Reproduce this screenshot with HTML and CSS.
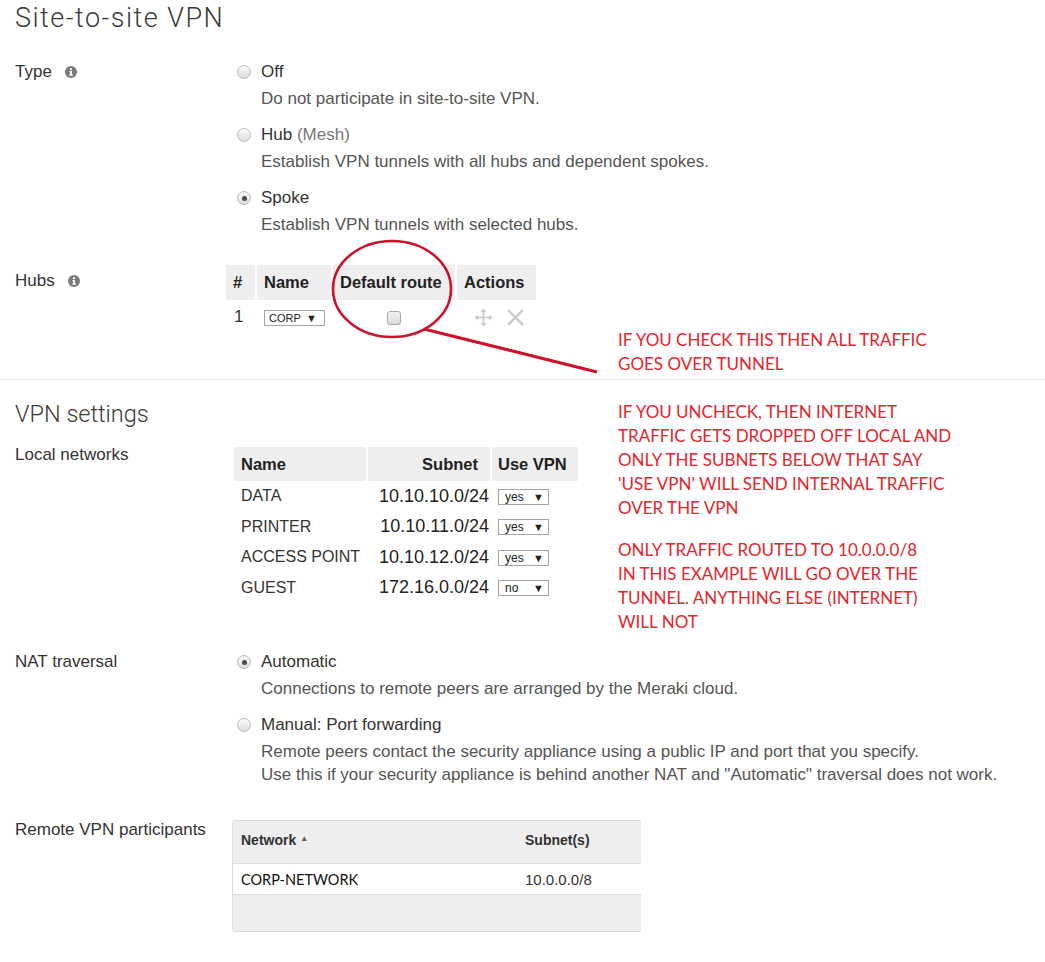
FILE: index.html
```html
<!DOCTYPE html>
<html lang="en">
<head>
<meta charset="utf-8">
<title>Site-to-site VPN</title>
<link rel="stylesheet" href="styles.css">
</head>
<body>
<div class="page">
  <h1 class="title">Site-to-site VPN</h1>

  <div class="field field-type">
    <div class="label">Type <svg class="info" viewBox="0 0 12 12" width="12" height="12"><circle cx="6" cy="6" r="6" fill="#7b7b7b"/><circle cx="6" cy="3.2" r="1.1" fill="#fff"/><path d="M4.4 5h2.6v3.6h0.9v1.2H4.3V8.6h0.9V6.2h-0.8z" fill="#fff"/></svg></div>
    <div class="options">
      <div class="option">
        <div class="opt-line"><span class="radio"></span><span>Off</span></div>
        <div class="desc">Do not participate in site-to-site VPN.</div>
      </div>
      <div class="option">
        <div class="opt-line"><span class="radio"></span><span>Hub <span class="muted">(Mesh)</span></span></div>
        <div class="desc">Establish VPN tunnels with all hubs and dependent spokes.</div>
      </div>
      <div class="option">
        <div class="opt-line"><span class="radio on"></span><span>Spoke</span></div>
        <div class="desc">Establish VPN tunnels with selected hubs.</div>
      </div>
    </div>
  </div>

  <div class="field field-hubs">
    <div class="label label-hubs">Hubs <svg class="info" viewBox="0 0 12 12" width="12" height="12"><circle cx="6" cy="6" r="6" fill="#7b7b7b"/><circle cx="6" cy="3.2" r="1.1" fill="#fff"/><path d="M4.4 5h2.6v3.6h0.9v1.2H4.3V8.6h0.9V6.2h-0.8z" fill="#fff"/></svg></div>
    <div class="content">
      <table class="hubs">
        <thead>
          <tr><th class="c-num">#</th><th class="c-name">Name</th><th class="c-def">Default route</th><th class="c-act">Actions</th></tr>
        </thead>
        <tbody>
          <tr>
            <td class="c-num">1</td>
            <td class="c-name"><span class="sel sel-corp"><span class="sel-text">CORP</span><span class="sel-arrow">▼</span></span></td>
            <td class="c-def"><span class="checkbox"></span></td>
            <td class="c-act">
              <svg class="ico-move" viewBox="0 0 20 20" width="19" height="19"><g stroke="#cacaca" stroke-width="1.6"><line x1="10" y1="3" x2="10" y2="17"/><line x1="3" y1="10" x2="17" y2="10"/></g><g fill="#cacaca"><polygon points="10,0.5 6.8,4.2 13.2,4.2"/><polygon points="10,19.5 6.8,15.8 13.2,15.8"/><polygon points="0.5,10 4.2,6.8 4.2,13.2"/><polygon points="19.5,10 15.8,6.8 15.8,13.2"/></g></svg>
              <svg class="ico-x" viewBox="0 0 17 17" width="17" height="17"><g stroke="#cacaca" stroke-width="2.4" stroke-linecap="square"><line x1="2" y1="2" x2="15" y2="15"/><line x1="15" y1="2" x2="2" y2="15"/></g></svg>
            </td>
          </tr>
        </tbody>
      </table>
    </div>
  </div>
</div>

<hr class="divider">

<div class="page">
  <h2 class="subtitle">VPN settings</h2>

  <div class="field field-local">
    <div class="label">Local networks</div>
    <div class="content">
      <table class="local">
        <thead>
          <tr><th class="l-name">Name</th><th class="l-sub">Subnet</th><th class="l-use">Use VPN</th></tr>
        </thead>
        <tbody>
          <tr><td class="l-name">DATA</td><td class="l-sub">10.10.10.0/24</td><td class="l-use"><span class="sel sel-yn"><span class="sel-text">yes</span><span class="sel-arrow">▼</span></span></td></tr>
          <tr><td class="l-name">PRINTER</td><td class="l-sub">10.10.11.0/24</td><td class="l-use"><span class="sel sel-yn"><span class="sel-text">yes</span><span class="sel-arrow">▼</span></span></td></tr>
          <tr><td class="l-name">ACCESS POINT</td><td class="l-sub">10.10.12.0/24</td><td class="l-use"><span class="sel sel-yn"><span class="sel-text">yes</span><span class="sel-arrow">▼</span></span></td></tr>
          <tr><td class="l-name">GUEST</td><td class="l-sub">172.16.0.0/24</td><td class="l-use"><span class="sel sel-yn"><span class="sel-text">no</span><span class="sel-arrow">▼</span></span></td></tr>
        </tbody>
      </table>
    </div>
  </div>

  <div class="field field-nat">
    <div class="label">NAT traversal</div>
    <div class="options">
      <div class="option">
        <div class="opt-line"><span class="radio on"></span><span>Automatic</span></div>
        <div class="desc">Connections to remote peers are arranged by the Meraki cloud.</div>
      </div>
      <div class="option">
        <div class="opt-line"><span class="radio"></span><span>Manual: Port forwarding</span></div>
        <div class="desc">Remote peers contact the security appliance using a public IP and port that you specify.<br>Use this if your security appliance is behind another NAT and "Automatic" traversal does not work.</div>
      </div>
    </div>
  </div>

  <div class="field field-remote">
    <div class="label">Remote VPN participants</div>
    <div class="content">
      <div class="rtable">
        <div class="rhead"><div class="rc1">Network <span class="sort">▲</span></div><div class="rc2">Subnet(s)</div></div>
        <div class="rrow"><div class="rc1 rnet">CORP-NETWORK</div><div class="rc2 rsub">10.0.0.0/8</div></div>
        <div class="rfoot"></div>
      </div>
    </div>
  </div>
</div>

<svg class="markup" viewBox="0 0 1045 962" width="1045" height="962">
  <ellipse cx="392" cy="289" rx="59" ry="48" fill="none" stroke="#c9142b" stroke-width="2.6"/>
  <line x1="424" y1="329" x2="597" y2="372" stroke="#c9142b" stroke-width="3"/>
</svg>

<div class="note">
  <p class="p1">IF YOU CHECK THIS THEN ALL TRAFFIC<br>GOES OVER TUNNEL</p>
  <p class="p2">IF YOU UNCHECK, THEN INTERNET<br>TRAFFIC GETS DROPPED OFF LOCAL AND<br>ONLY THE SUBNETS BELOW THAT SAY<br>'USE VPN' WILL SEND INTERNAL TRAFFIC<br>OVER THE VPN</p>
  <p class="p3">ONLY TRAFFIC ROUTED TO 10.0.0.0/8<br>IN THIS EXAMPLE WILL GO OVER THE<br>TUNNEL. ANYTHING ELSE (INTERNET)<br>WILL NOT</p>
</div>
</body>
</html>
```

FILE: styles.css
```css
html, body {
  margin: 0;
  padding: 0;
  background: #fff;
}
body {
  position: relative;
  box-sizing: border-box;
  width: 1045px;
  height: 962px;
  padding-top: 1px;
  overflow: hidden;
  font-family: "Liberation Sans", Arial, sans-serif;
  font-size: 17px;
  color: #333;
}
.page {
  padding: 0 15px;
}
.title {
  margin: 0;
  font-family: Roboto, "Liberation Sans", sans-serif;
  font-weight: 300;
  font-size: 27px;
  line-height: 34px;
  letter-spacing: 1.5px;
  color: #3a3a3a;
}
.subtitle {
  margin: 19px 0 0;
  font-family: Roboto, "Liberation Sans", sans-serif;
  font-weight: 300;
  font-size: 23.5px;
  line-height: 30px;
  color: #3a3a3a;
}
.field {
  display: flex;
  align-items: flex-start;
}
.label {
  width: 211px;
  flex: none;
  line-height: 26px;
  color: #333;
  display: flex;
  align-items: center;
}
.info {
  margin-left: 13px;
}
.field-type { margin-top: 24px; }
.field-hubs { margin-top: 29px; }
.label-hubs { padding-top: 3px; }

.options {
  padding-left: 11px;
}
.option {
  margin-bottom: 12px;
}
.option:last-child {
  margin-bottom: 0;
}
.opt-line {
  display: flex;
  align-items: center;
  height: 26px;
  color: #333;
}
.muted { color: #777; }
.radio {
  box-sizing: border-box;
  width: 14px;
  height: 14px;
  border-radius: 50%;
  border: 1px solid #bdbdbd;
  background: linear-gradient(#fbfbfb, #dcdcdc);
  margin-right: 10px;
  position: relative;
  flex: none;
}
.radio.on::after {
  content: "";
  position: absolute;
  left: 3.5px;
  top: 3.5px;
  width: 5px;
  height: 5px;
  border-radius: 50%;
  background: #4a4a4a;
}
.desc {
  margin-top: 2px;
  padding-left: 24px;
  line-height: 23px;
  color: #555;
}

/* Hubs table */
table {
  border-collapse: separate;
  border-spacing: 2px 0;
}
.hubs {
  margin-left: -2px;
}
.hubs th, .local th {
  box-sizing: border-box;
  background: #eee;
  font-weight: bold;
  font-size: 16.5px;
  color: #222;
  text-align: left;
  padding: 0 0 0 7px;
  white-space: nowrap;
}
.hubs th { height: 35px; }
.hubs th.c-num { width: 29px; }
.hubs th.c-name { width: 74px; }
.hubs th.c-def { width: 122px; }
.hubs th.c-act { width: 79px; }
.hubs td {
  height: 34px;
  padding: 0 0 0 7px;
  vertical-align: middle;
}
.hubs td.c-num { padding-left: 8px; }
.hubs td.c-def { text-align: center; padding: 0; }
.hubs td.c-act { padding-left: 17px; white-space: nowrap; }
.ico-move, .ico-x { vertical-align: middle; }
.ico-x { margin-left: 9px; }
.checkbox {
  display: inline-block;
  box-sizing: border-box;
  width: 14px;
  height: 14px;
  border: 1px solid #a8a8a8;
  border-radius: 3px;
  background: linear-gradient(#f2f2f2, #d9d9d9);
  vertical-align: middle;
}
.sel {
  display: inline-flex;
  align-items: center;
  justify-content: space-between;
  box-sizing: border-box;
  height: 16px;
  border: 1px solid #a4a4a4;
  background: #fff;
  color: #222;
  vertical-align: middle;
}
.sel-corp {
  width: 61px;
  padding: 0 7px 0 4px;
  font-family: "Liberation Sans Narrow", "Liberation Sans", sans-serif;
  font-size: 11px;
}
.sel-yn {
  width: 51px;
  padding: 0 4px 0 6px;
  font-size: 12px;
}
.sel-arrow {
  font-size: 11px;
  color: #222;
}

.divider {
  margin: 45px 0 0;
  border: 0;
  border-top: 1px solid #e6e6e6;
  height: 0;
}

/* Local networks */
.field-local { margin-top: 13px; }
.local {
  margin-top: 5px;
  margin-left: 6px;
}
.local th { height: 34px; }
.local th.l-name { width: 132px; }
.local th.l-sub { width: 122px; text-align: right; padding: 0 12px 0 0; }
.local th.l-use { width: 86px; padding-left: 6px; }
.local td {
  height: 30.5px;
  padding: 0;
  vertical-align: middle;
  white-space: nowrap;
}
.local td.l-name { padding-left: 7px; font-size: 16px; color: #333; }
.local td.l-sub { text-align: right; padding-right: 1px; font-size: 18px; color: #222; }
.local td.l-use { padding-left: 6px; }

/* NAT */
.field-nat { margin-top: 46px; }

/* Remote */
.field-remote { margin-top: 31px; }
.rtable {
  margin-top: 3px;
  margin-left: 6px;
  width: 408px;
  border: 1px solid #dcdcdc;
  border-right: 0;
  border-radius: 4px 0 0 4px;
  overflow: hidden;
}
.rhead, .rrow {
  display: flex;
  align-items: center;
  border-bottom: 1px solid #dcdcdc;
}
.rhead {
  height: 43px;
  background: #eee;
  font-weight: bold;
  font-size: 14px;
  color: #333;
  padding-bottom: 4px;
  box-sizing: border-box;
}
.rrow {
  height: 30px;
  background: #fff;
}
.rfoot {
  height: 36px;
  background: #eee;
}
.rc1 {
  width: 284px;
  padding-left: 8px;
  box-sizing: border-box;
}
.rc2 {
  padding-left: 8px;
}
.sort {
  font-size: 8px;
  color: #555;
  vertical-align: 4px;
}
.rnet {
  font-family: Lato, "Liberation Sans", sans-serif;
  font-size: 14.5px;
  color: #111;
}
.rsub {
  font-size: 15px;
  color: #333;
}

/* Annotation overlay */
.markup {
  position: absolute;
  left: 0;
  top: 0;
  pointer-events: none;
}
.note {
  position: absolute;
  left: 618px;
  top: 328px;
  font-family: Lato, "Liberation Sans", sans-serif;
  font-size: 17px;
  line-height: 24px;
  color: #e3262d;
  white-space: nowrap;
}
.note p { margin: 0; }
.note .p1 { margin-bottom: 24px; }
.note .p2 { margin-bottom: 18px; }
```
